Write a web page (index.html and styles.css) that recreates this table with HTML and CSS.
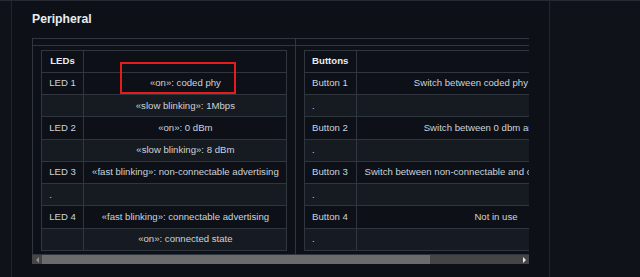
FILE: index.html
```html
<!DOCTYPE html>
<html lang="en">
<head>
    <meta charset="UTF-8">
    <meta name="viewport" content="width=device-width, initial-scale=1.0">
    <title>Peripheral</title>
    <link rel="stylesheet" href="styles.css">
</head>
<body>
    <div class="page">
        <div class="panel">
            <h3>Peripheral</h3>

            <div class="scroll-box">
                <table class="md-table outer">
                    <thead>
                        <tr><th></th><th></th></tr>
                    </thead>
                    <tbody>
                        <tr>
                            <td>
                                <table class="md-table">
                                    <thead>
                                        <tr><th>LEDs</th><th></th></tr>
                                    </thead>
                                    <tbody>
                                        <tr><td>LED 1</td><td>«on»: coded phy</td></tr>
                                        <tr><td></td><td>«slow blinking»: 1Mbps</td></tr>
                                        <tr><td>LED 2</td><td>«on»: 0 dBm</td></tr>
                                        <tr><td></td><td>«slow blinking»: 8 dBm</td></tr>
                                        <tr><td>LED 3</td><td>«fast blinking»: non-connectable advertising</td></tr>
                                        <tr><td>.</td><td></td></tr>
                                        <tr><td>LED 4</td><td>«fast blinking»: connectable advertising</td></tr>
                                        <tr><td></td><td>«on»: connected state</td></tr>
                                    </tbody>
                                </table>
                            </td>
                            <td>
                                <table class="md-table">
                                    <thead>
                                        <tr><th>Buttons</th><th></th></tr>
                                    </thead>
                                    <tbody>
                                        <tr><td>Button 1</td><td>Switch between coded phy and 1Mbps</td></tr>
                                        <tr><td>.</td><td></td></tr>
                                        <tr><td>Button 2</td><td>Switch between 0 dbm and 8 dbm</td></tr>
                                        <tr><td>.</td><td></td></tr>
                                        <tr><td>Button 3</td><td>Switch between non-connectable and connectable advertising</td></tr>
                                        <tr><td>.</td><td></td></tr>
                                        <tr><td>Button 4</td><td>Not in use</td></tr>
                                        <tr><td>.</td><td></td></tr>
                                    </tbody>
                                </table>
                            </td>
                        </tr>
                    </tbody>
                </table>

                <!-- horizontal scrollbar under the wide table -->
                <div class="hscroll">
                    <span class="hscroll-btn left"></span>
                    <span class="hscroll-thumb"></span>
                    <span class="hscroll-rest"></span>
                    <span class="hscroll-btn right"></span>
                </div>
            </div>
        </div>
    </div>

    <!-- highlight box drawn over the first LED row -->
    <div class="highlight"></div>
</body>
</html>
```

FILE: styles.css
```css
* {
    margin: 0;
    padding: 0;
    box-sizing: border-box;
}

body {
    font-family: "Liberation Sans", Arial, sans-serif;
    background: #0f1319;
    color: #ccd3db;
    height: 277px;
    overflow: hidden;
    position: relative;
}

.page {
    border-top: 1px solid #262b33;
    height: 100%;
}

.panel {
    margin-left: 11px;
    width: 539px;
    height: 100%;
    padding: 0 20px;
    background: #0d1117;
    border-left: 1px solid #21262d;
    border-right: 1px solid #21262d;
}

h3 {
    font-size: 12.2px;
    line-height: 15px;
    font-weight: 700;
    color: #e6edf3;
    padding-top: 11px;
    margin-bottom: 11px;
}

.scroll-box {
    width: 497px;
}

.md-table {
    display: block;
    width: max-content;
    max-width: 100%;
    overflow: hidden;
    border-collapse: collapse;
    border-spacing: 0;
    font-size: 9.6px;
    line-height: 14.25px;
}

.md-table th,
.md-table td {
    border: 1px solid #30363d;
    padding: 3.5px 7.6px;
    text-align: center;
    vertical-align: middle;
}

.md-table td:first-child {
    text-align: left;
}

.md-table th {
    font-weight: 700;
    color: #e6edf3;
}

.md-table tr {
    background: #0d1117;
    border-top: 1px solid #21262d;
}

.md-table tbody tr:nth-child(2n) {
    background: #161b22;
}

.outer > tbody > tr > td {
    vertical-align: top;
}

.outer > thead th {
    padding: 3px 7.6px;
}

.hscroll {
    display: flex;
    height: 9px;
    background: #454545;
}

.hscroll-btn {
    width: 10px;
    display: flex;
    align-items: center;
    justify-content: center;
}

.hscroll-btn::before {
    content: "";
    border-top: 3px solid transparent;
    border-bottom: 3px solid transparent;
}

.hscroll-btn.left::before {
    border-right: 3px solid #8c8c8c;
}

.hscroll-btn.right::before {
    border-left: 3px solid #e8e8e8;
}

.hscroll-thumb {
    width: 388px;
    background: #6b6b6b;
}

.hscroll-rest {
    flex: 1;
}

.highlight {
    position: absolute;
    left: 120px;
    top: 62px;
    width: 116px;
    height: 32px;
    border: 2px solid #e51c1c;
}
```
